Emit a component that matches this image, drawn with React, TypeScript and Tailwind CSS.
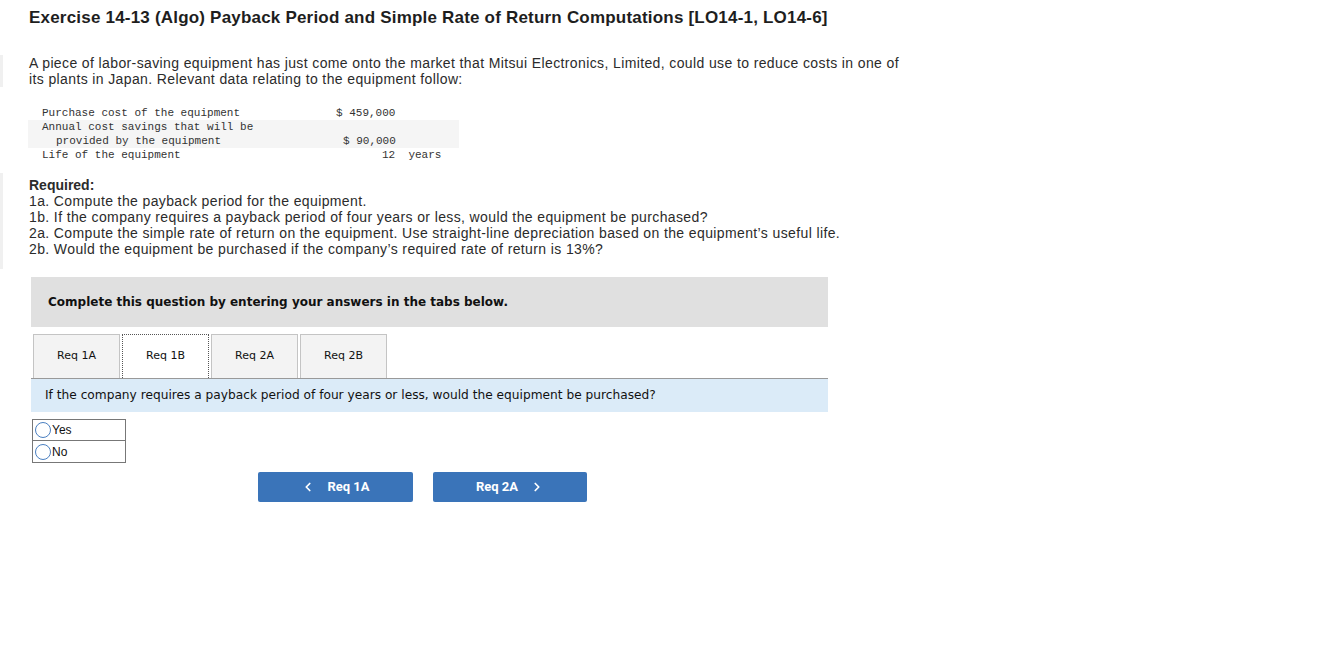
import { ChevronLeft, ChevronRight } from "lucide-react";

const sans = "font-['Liberation_Sans',Arial,sans-serif]";
const verdana = "font-['DejaVu_Sans','Verdana',sans-serif]";

const tabs = ["Req 1A", "Req 1B", "Req 2A", "Req 2B"];

const App = () => {
  return (
    <div className={`min-h-[670px] w-[1327px] bg-white text-[#333] ${sans}`}>
      <div className="pl-[29px] pt-[7px]">
        <h1 className="text-[17px] font-bold text-[#1e1e1e] leading-[22px] tracking-[0.2px]">
          Exercise 14-13 (Algo) Payback Period and Simple Rate of Return Computations [LO14-1, LO14-6]
        </h1>
      </div>

      <div className="mt-[26px] border-l-[3px] border-[#f0f0f0] pl-[26px] w-[900px]">
        <p className="text-[14px] leading-[16px] text-[#2b2b2b] w-[872px] tracking-[0.38px]">
          A piece of labor-saving equipment has just come onto the market that Mitsui Electronics, Limited, could use to reduce costs in one of its plants in Japan. Relevant data relating to the equipment follow:
        </p>
      </div>

      <div className="mt-[19px] ml-[28px] w-[431px] font-['Liberation_Mono',monospace] text-[11px] leading-[14px] text-[#333]">
        <div className="flex pl-[14px]">
          <span className="w-[294px]">Purchase cost of the equipment</span>
          <span>$ 459,000</span>
        </div>
        <div className="bg-[#f5f5f5] pl-[14px]">
          <div>Annual cost savings that will be</div>
          <div className="flex">
            <span className="w-[301px] pl-[14px]">provided by the equipment</span>
            <span>$ 90,000</span>
          </div>
        </div>
        <div className="flex pl-[14px]">
          <span className="w-[340px]">Life of the equipment</span>
          <span>12&nbsp;&nbsp;years</span>
        </div>
      </div>

      <div className="mt-[11px] border-l-[3px] border-[#f0f0f0] pl-[26px] pt-[4px] pb-[12px] text-[14px] leading-[16px] text-[#2b2b2b] tracking-[0.38px]">
        <div className="font-bold tracking-normal">Required:</div>
        <div>1a. Compute the payback period for the equipment.</div>
        <div>1b. If the company requires a payback period of four years or less, would the equipment be purchased?</div>
        <div>2a. Compute the simple rate of return on the equipment. Use straight-line depreciation based on the equipment’s useful life.</div>
        <div>2b. Would the equipment be purchased if the company’s required rate of return is 13%?</div>
      </div>

      <div className="ml-[31px] w-[797px] mt-[8px]">
        <div className={`bg-[#e0e0e0] h-[50px] flex items-center pl-[17px] text-[12px] font-bold text-[#111] ${verdana}`}>
          Complete this question by entering your answers in the tabs below.
        </div>

        <div className={`mt-[7px] flex gap-[2px] pl-[2px] ${verdana} text-[11px]`}>
          {tabs.map((t, i) => (
            <div
              key={t}
              className={
                i === 1
                  ? "w-[87px] h-[44px] flex items-center justify-center bg-white border border-dotted border-[#555] border-b-0 text-[#111]"
                  : "w-[87px] h-[44px] flex items-center justify-center bg-[#f3f3f3] border border-[#c4c4c4] border-b-0 text-[#111]"
              }
            >
              {t}
            </div>
          ))}
        </div>

        <div className={`border-t border-[#999] bg-[#dbebf8] h-[34px] flex items-center pl-[14px] text-[12.2px] text-[#111] ${verdana}`}>
          If the company requires a payback period of four years or less, would the equipment be purchased?
        </div>

        <div className="mt-[7px] ml-[1px] w-[94px] border border-[#777] font-['Liberation_Sans',Arial,sans-serif] text-[12px] text-[#111]">
          {["Yes", "No"].map((o, i) => (
            <div key={o} className={`flex items-center h-[21px] ${i === 0 ? "border-b border-[#777]" : ""}`}>
              <span className="ml-[2px] w-[16px] h-[16px] rounded-full border border-[#4a7fc1] bg-white" />
              <span className="ml-[1px]">{o}</span>
            </div>
          ))}
        </div>

        <div className="mt-[9px] ml-[227px] flex gap-[20px] font-['Roboto',sans-serif] text-[13px] font-bold text-white">
          <button className="w-[155px] h-[30px] rounded-[2px] bg-[#3a74b9] flex items-center justify-center gap-[12px]">
            <ChevronLeft size={14} strokeWidth={3} />
            <span>Req 1A</span>
          </button>
          <button className="w-[154px] h-[30px] rounded-[2px] bg-[#3a74b9] flex items-center justify-center gap-[12px]">
            <span>Req 2A</span>
            <ChevronRight size={14} strokeWidth={3} />
          </button>
        </div>
      </div>
    </div>
  );
};

export default App;
